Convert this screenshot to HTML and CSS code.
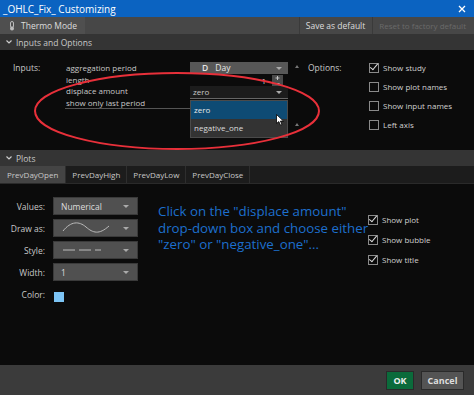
FILE: index.html
```html
<!DOCTYPE html>
<html>
<head>
	<meta charset="UTF-8">
	<title>_OHLC_Fix_ Customizing</title>
	<link rel="stylesheet" href="styles.css">
</head>
<body>
<div class="window">
	<div class="titlebar">
		<span>_OHLC_Fix_ Customizing</span>
		<svg class="close" width="8" height="8" viewBox="0 0 8 8"><path d="M1 1L7 7M7 1L1 7" stroke="#fff" stroke-width="1.3"/></svg>
	</div>
	<div class="toolbar">
		<div class="tool thermo">
			<svg width="6" height="10" viewBox="0 0 6 10"><rect x="1.5" y="0.5" width="3" height="6" rx="1.5" fill="none" stroke="#bbb"/><circle cx="3" cy="7.5" r="2" fill="#bbb"/></svg>
			Thermo Mode
		</div>
		<div class="spacer"></div>
		<div class="tool sep">Save as default</div>
		<div class="tool sep dim">Reset to factory default</div>
	</div>
	<div class="section-head">
		<svg width="6" height="4" viewBox="0 0 6 4"><path d="M0.5 0.5L3 3L5.5 0.5" fill="none" stroke="#ccc" stroke-width="1.2"/></svg>
		Inputs and Options
	</div>
	<div class="inputs-panel">
		<div class="inputs-label">Inputs:</div>
		<div class="inputs-box">
			<div class="names">
				<div class="row">aggregation period</div>
				<div class="row">length</div>
				<div class="row">displace amount</div>
				<div class="row last">show only last period</div>
			</div>
			<div class="values">
				<div class="row combo light"><b>D</b><span class="day">Day</span><i class="arrow"></i></div>
				<div class="row spin">1<svg class="spinner" width="11" height="11" viewBox="0 0 11 11"><rect width="11" height="11" fill="#4a4a4a"/><path d="M3.5 3H7.5M5.5 1V5M3.5 8.5H7.5" stroke="#ccc" stroke-width="0.9"/></svg></div>
				<div class="row combo dark">zero<i class="arrow"></i></div>
			</div>
			<div class="popup">
				<div class="item selected">zero</div>
				<div class="item">negative_one</div>
			</div>
		</div>
		<div class="scroll">
			<svg width="4" height="3" viewBox="0 0 4 3"><path d="M0 3L2 0L4 3Z" fill="#777"/></svg>
			<svg width="4" height="3" viewBox="0 0 4 3"><path d="M0 3L2 0L4 3Z" fill="#777"/></svg>
		</div>
		<div class="options">
			<div class="options-label">Options:</div>
			<div class="checks">
				<label class="check on"><i></i>Show study</label>
				<label class="check"><i></i>Show plot names</label>
				<label class="check"><i></i>Show input names</label>
				<label class="check"><i></i>Left axis</label>
			</div>
		</div>
		<svg class="ellipse" width="300" height="86" viewBox="0 0 300 86"><ellipse cx="150" cy="42" rx="142" ry="38" fill="none" stroke="#e8303a" stroke-width="2"/></svg>
		<svg class="cursor" width="9" height="12" viewBox="0 0 9 12"><path d="M0.5 0.5L0.5 9.5L2.8 7.6L4.5 11.2L6 10.5L4.4 7.1L7.5 7.1Z" fill="#fff" stroke="#000" stroke-width="0.8"/></svg>
	</div>
	<div class="section-head">
		<svg width="6" height="4" viewBox="0 0 6 4"><path d="M0.5 0.5L3 3L5.5 0.5" fill="none" stroke="#ccc" stroke-width="1.2"/></svg>
		Plots
	</div>
	<div class="tabs">
		<div class="tab active">PrevDayOpen</div>
		<div class="tab">PrevDayHigh</div>
		<div class="tab">PrevDayLow</div>
		<div class="tab">PrevDayClose</div>
	</div>
	<div class="plots-panel">
		<div class="fields">
			<div class="field">
				<span class="flabel">Values:</span>
				<div class="select">Numerical<i class="arrow"></i></div>
			</div>
			<div class="field">
				<span class="flabel">Draw as:</span>
				<div class="select">
					<svg width="50" height="12" viewBox="0 0 50 12"><path d="M2 9C10 -1 18 -1 25 5S38 13 48 4" fill="none" stroke="#bbb" stroke-width="1"/></svg>
					<i class="arrow"></i>
				</div>
			</div>
			<div class="field">
				<span class="flabel">Style:</span>
				<div class="select">
					<svg width="44" height="4" viewBox="0 0 44 4"><path d="M2 2H14M18 2H30M34 2H40" stroke="#bbb" stroke-width="1"/></svg>
					<i class="arrow"></i>
				</div>
			</div>
			<div class="field">
				<span class="flabel">Width:</span>
				<div class="select">1<i class="arrow"></i></div>
			</div>
			<div class="field">
				<span class="flabel">Color:</span>
				<span class="swatch"></span>
			</div>
		</div>
		<div class="note">Click on the "displace amount" drop-down box and choose either "zero" or "negative_one"...</div>
		<div class="checks plot-checks">
			<label class="check on"><i></i>Show plot</label>
			<label class="check on"><i></i>Show bubble</label>
			<label class="check on"><i></i>Show title</label>
		</div>
	</div>
	<div class="footer">
		<button class="ok">OK</button>
		<button class="cancel">Cancel</button>
	</div>
</div>
</body>
</html>
```

FILE: styles.css
```css
html, body {
	margin: 0;
	height: 100%;
}
body {
	background-color: #0b0b0b;
	color: #c8c8c8;
	font-family: "Open Sans", sans-serif;
	font-size: 8px;
}
.window {
	display: flex;
	flex-direction: column;
	height: 100%;
}
.titlebar {
	height: 17px;
	background-color: #0b63c1;
	color: #fff;
	font-size: 10px;
	display: flex;
	align-items: center;
	justify-content: space-between;
	padding: 0 8px 0 3px;
}
.toolbar {
	height: 17px;
	background-color: #474747;
	display: flex;
	align-items: stretch;
	color: #ddd;
	font-size: 8.5px;
}
.tool {
	display: flex;
	align-items: center;
	padding: 0 7px 0 6px;
}
.thermo {
	background-color: #4f4f4f;
	gap: 6px;
	padding: 0 8px 0 9px;
}
.spacer {
	flex: 1;
}
.sep {
	border-left: 1px solid #3a3a3a;
}
.dim {
	color: #6a6a6a;
	font-size: 8px;
	padding-right: 8px;
}
.section-head {
	height: 16px;
	background-color: #343434;
	display: flex;
	align-items: center;
	gap: 4px;
	padding-left: 6px;
	color: #c8c8c8;
	font-size: 8.5px;
}
.inputs-panel {
	height: 100px;
	display: flex;
	position: relative;
	padding-top: 12px;
	box-sizing: border-box;
}
.inputs-label {
	width: 52px;
	padding-left: 13px;
	line-height: 11.5px;
	font-size: 8.5px;
}
.inputs-box {
	display: flex;
	position: relative;
	width: 225px;
}
.names {
	width: 125px;
	font-size: 8px;
}
.row {
	height: 11.5px;
	line-height: 11.5px;
	white-space: nowrap;
}
.names .row {
	padding-left: 1px;
}
.names .last {
	border-bottom: 1px solid #555;
}
.values {
	width: 98px;
}
.combo {
	display: flex;
	align-items: center;
	position: relative;
	padding-left: 3px;
}
.combo.light {
	background-color: #575757;
	color: #e6e6e6;
	margin-bottom: 1px;
	font-size: 8.5px;
}
.combo.light b {
	margin-left: 9px;
	font-weight: 600;
}
.day {
	margin-left: 7px;
}
.combo.dark {
	background-color: #1c1c1c;
	border-bottom: 1px solid #666;
}
.arrow {
	position: absolute;
	right: 6px;
	top: 50%;
	margin-top: -1px;
	border-left: 3px solid transparent;
	border-right: 3px solid transparent;
	border-top: 3px solid #aaa;
}
.spin {
	display: flex;
	justify-content: flex-end;
	align-items: center;
	padding-right: 5px;
	color: #ddd;
}
.spinner {
	margin-left: 6px;
}
.popup {
	position: absolute;
	left: 125px;
	top: 38px;
	width: 98px;
	background-color: #333;
	border: 1px solid #4a4a4a;
	box-sizing: border-box;
}
.item {
	height: 18px;
	line-height: 18px;
	padding-left: 3px;
	color: #ddd;
}
.item.selected {
	background-color: #0e4b74;
	color: #e8e8e8;
}
.scroll {
	width: 14px;
	display: flex;
	flex-direction: column;
	align-items: center;
	justify-content: space-between;
	padding: 3px 0 24px;
	box-sizing: border-box;
	height: 88px;
}
.options {
	display: flex;
	margin-left: 4px;
}
.options-label {
	width: 61px;
	line-height: 11.5px;
	font-size: 8.5px;
}
.checks {
	display: flex;
	flex-direction: column;
	gap: 8px;
}
.check {
	display: flex;
	align-items: center;
	gap: 4px;
	height: 11px;
	color: #d0d0d0;
	font-size: 8px;
}
.check i {
	width: 8px;
	height: 8px;
	border: 1px solid #8a8a8a;
	position: relative;
}
.check.on i::after {
	content: "";
	position: absolute;
	left: 2px;
	top: -2px;
	width: 3px;
	height: 7px;
	border-right: 1.5px solid #ddd;
	border-bottom: 1.5px solid #ddd;
	transform: rotate(40deg);
}
.ellipse {
	position: absolute;
	left: 27px;
	top: 19px;
}
.cursor {
	position: absolute;
	left: 276px;
	top: 64px;
}
.tabs {
	height: 17px;
	display: flex;
	background-color: #1c1c1c;
	border-bottom: 1px solid #2a2a2a;
}
.tab {
	display: flex;
	align-items: center;
	padding: 0 6px;
	border-right: 1px solid #2e2e2e;
	color: #c8c8c8;
	font-size: 8px;
}
.tab.active {
	background-color: #444;
	padding: 0 7px;
}
.plots-panel {
	flex: 1;
	display: flex;
	padding-top: 13px;
}
.fields {
	display: flex;
	flex-direction: column;
	gap: 4px;
	width: 158px;
	font-size: 8.5px;
}
.field {
	display: flex;
	align-items: center;
	height: 18px;
}
.flabel {
	width: 45px;
	text-align: right;
	margin-right: 8px;
}
.select {
	width: 85px;
	height: 18px;
	background-color: #505050;
	border: 1px solid #3a3a3a;
	box-sizing: border-box;
	position: relative;
	display: flex;
	align-items: center;
	padding-left: 7px;
	color: #ddd;
}
.select .arrow {
	right: 8px;
}
.swatch {
	width: 10px;
	height: 10px;
	margin-left: 1px;
	margin-top: 6px;
	background-color: #7cc4f5;
}
.note {
	width: 212px;
	color: #1d6fcd;
	font-size: 13.3px;
	line-height: 16.5px;
	padding-top: 6px;
}
.plot-checks {
	padding-top: 17px;
	margin-left: -2px;
	gap: 9px;
}
.footer {
	height: 30px;
	background-color: #3b3b3b;
	display: flex;
	justify-content: flex-end;
	align-items: center;
	gap: 7px;
	padding-right: 10px;
}
button {
	font-family: "Open Sans", sans-serif;
	font-size: 9px;
	font-weight: 700;
	height: 19px;
	border: 1px solid #2a2a2a;
	color: #eee;
	padding: 0;
}
.ok {
	width: 28px;
	background-color: #0b6b3b;
}
.cancel {
	width: 43px;
	background-color: #545454;
	color: #ddd;
}
```
